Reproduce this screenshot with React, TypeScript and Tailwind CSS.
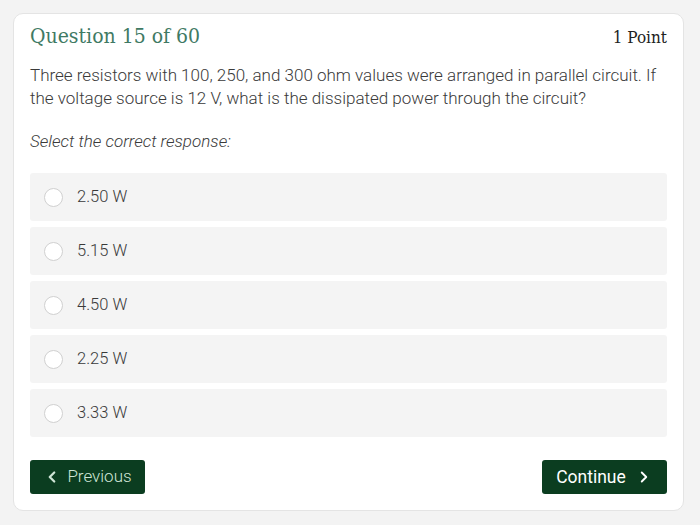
import { ChevronLeft, ChevronRight } from "lucide-react";

const options = ["2.50 W", "5.15 W", "4.50 W", "2.25 W", "3.33 W"];

export default function App() {
  return (
    <div className="h-[525px] w-[700px] bg-[#f3f3f3] p-[13px] font-['Roboto',sans-serif]">
      <div className="flex h-[498px] w-[671px] flex-col rounded-[10px] border border-[#e4e4e4] bg-white px-[16px] pt-[7px]">
        {/* Header */}
        <div className="flex items-baseline justify-between">
          <h1 className="font-['DejaVu_Serif_Condensed','DejaVu_Serif',serif] text-[21px] text-[#3f7a64]">
            Question 15 of 60
          </h1>
          <span className="font-['DejaVu_Serif_Condensed','DejaVu_Serif',serif] text-[17px] text-[#222]">
            1 Point
          </span>
        </div>

        <p className="mt-[11px] text-[17px] font-light leading-[23px] text-[#3a3a3a]">
          Three resistors with 100, 250, and 300 ohm values were arranged in parallel circuit. If
          the voltage source is 12 V, what is the dissipated power through the circuit?
        </p>

        <p className="mt-[19px] text-[17px] font-light italic text-[#3a3a3a]">
          Select the correct response:
        </p>

        {/* Options */}
        <div className="mt-[19px] flex flex-col gap-[6px]">
          {options.map((o) => (
            <label
              key={o}
              className="flex h-[48px] items-center rounded-[3px] bg-[#f4f4f4] pl-[14px]"
            >
              <span className="h-[19px] w-[19px] rounded-full border border-[#d0d0d0] bg-white" />
              <span className="ml-[14px] text-[16.5px] font-light text-[#3a3a3a]">{o}</span>
            </label>
          ))}
        </div>

        {/* Nav */}
        <div className="mt-[23px] flex justify-between">
          <button className="flex h-[34px] w-[115px] items-center justify-center gap-[6px] rounded-[3px] bg-[#0b3d20] text-[17px] font-light text-[#cfe5d6]">
            <ChevronLeft className="h-[18px] w-[18px]" strokeWidth={3} />
            Previous
          </button>
          <button className="flex h-[34px] w-[125px] items-center justify-center gap-[9px] rounded-[3px] bg-[#0b3d20] text-[17.5px] font-normal text-white">
            Continue
            <ChevronRight className="h-[18px] w-[18px]" strokeWidth={2.5} />
          </button>
        </div>
      </div>
    </div>
  );
}
